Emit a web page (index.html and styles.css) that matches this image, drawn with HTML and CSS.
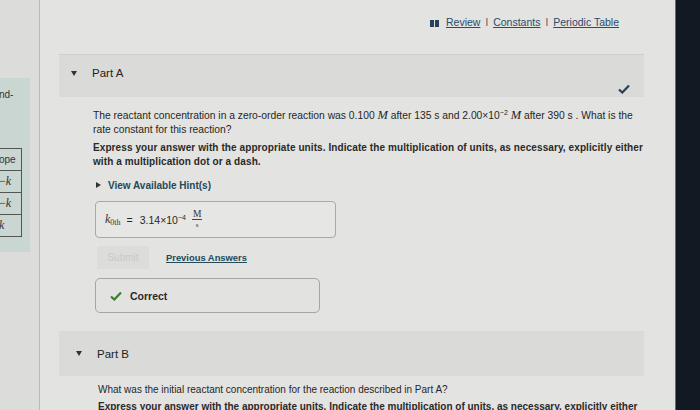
FILE: index.html
```html
<!DOCTYPE html>
<html>
<head>
<meta charset="utf-8">
<link rel="stylesheet" href="styles.css">
</head>
<body>
<div class="page">
  <aside class="side">
    <div class="teal">
      <div class="nd">nd-</div>
      <table class="tbl">
        <tr><td class="sans">ope</td></tr>
        <tr><td>&minus;<i>k</i></td></tr>
        <tr><td>&minus;<i>k</i></td></tr>
        <tr><td><i>k</i></td></tr>
      </table>
    </div>
  </aside>
  <main class="main">
    <div class="toplinks">
      <span class="book"><span></span><span></span></span>
      <a class="lnk">Review</a><span class="sep">I</span><a class="lnk">Constants</a><span class="sep">I</span><a class="lnk">Periodic Table</a>
    </div>
    <section class="part">
      <div class="part-head">
        <span class="tri"></span><span class="part-title">Part A</span>
        <svg class="done" width="12" height="10" viewBox="0 0 12 10"><path d="M1 5.5 L4.3 8.5 L11 1.5" fill="none" stroke="#2a3f55" stroke-width="2.2"/></svg>
      </div>
      <div class="part-body">
        <p class="q">The reactant concentration in a zero-order reaction was 0.100 <i class="m">M</i> after 135 s and 2.00&times;10<sup>&minus;2</sup> <i class="m">M</i> after 390 s . What is the rate constant for this reaction?</p>
        <p class="instr">Express your answer with the appropriate units. Indicate the multiplication of units, as necessary, explicitly either with a multiplication dot or a dash.</p>
        <div class="hint"><span class="tri-r"></span>View Available Hint(s)</div>
        <div class="answer">
          <span class="kvar"><i>k</i><sub>0th</sub></span>
          <span class="eq">=</span>
          <span class="val">3.14&times;10<sup>&minus;4</sup></span>
          <span class="frac"><span class="num">M</span><span class="den">s</span></span>
        </div>
        <div class="actions">
          <span class="submit">Submit</span>
          <a class="prev">Previous Answers</a>
        </div>
        <div class="correct">
          <svg width="12" height="10" viewBox="0 0 12 10"><path d="M1 5.5 L4.3 8.5 L11 1.5" fill="none" stroke="#3f7d2c" stroke-width="2.2"/></svg>
          <span>Correct</span>
        </div>
      </div>
    </section>
    <section class="part partb">
      <div class="part-head">
        <span class="tri"></span><span class="part-title">Part B</span>
      </div>
      <div class="part-body">
        <p class="q2">What was the initial reactant concentration for the reaction described in Part A?</p>
        <p class="q2 bold">Express your answer with the appropriate units. Indicate the multiplication of units, as necessary, explicitly either</p>
      </div>
    </section>
  </main>
  <div class="dark"></div>
</div>
</body>
</html>
```
FILE: styles.css
```css
html, body {
  margin: 0;
  padding: 0;
}
body {
  width: 700px;
  height: 410px;
  overflow: hidden;
  background: #e3e3e1;
  font-family: "Liberation Sans", Arial, sans-serif;
  color: #262626;
}
.page {
  display: flex;
  width: 700px;
  height: 410px;
}
.side {
  width: 40px;
  flex: none;
  background: #dcdddb;
  border-right: 1px solid #b9b9b7;
  padding-top: 78px;
  box-sizing: border-box;
  overflow: hidden;
}
.teal {
  width: 30px;
  height: 174px;
  background: #c9d6d2;
  overflow: hidden;
  padding-top: 11px;
  box-sizing: border-box;
}
.nd {
  font-size: 10px;
  color: #333;
  margin-left: -1px;
  height: 14px;
}
.tbl {
  border-collapse: collapse;
  margin-top: 45px;
  margin-left: -12px;
  width: 34px;
  font-family: "Liberation Serif", "Times New Roman", serif;
  font-size: 12px;
}
.tbl td {
  border: 1px solid #555;
  height: 21px;
  padding: 0 0 0 10px;
  color: #333;
  white-space: nowrap;
}
.tbl td.sans {
  font-family: "Liberation Sans", Arial, sans-serif;
  font-size: 10px;
}
.main {
  flex: 1;
  padding: 0 31px 0 19px;
  min-width: 0;
}
.toplinks {
  height: 55px;
  padding-top: 16px;
  box-sizing: border-box;
  border-bottom: 1px solid #cfcfcd;
  text-align: right;
  padding-right: 25px;
  font-size: 10.5px;
}
.book {
  display: inline-flex;
  gap: 1px;
  margin-right: 4px;
  vertical-align: -1px;
}
.book span {
  width: 4px;
  height: 7px;
  background: #27425f;
}
.lnk {
  color: #2c4a6b;
  text-decoration: underline;
}
.sep {
  color: #555;
  margin: 0 5px;
  font-size: 10px;
}
.part-head {
  height: 42px;
  background: #dadad8;
  display: flex;
  align-items: center;
  position: relative;
  padding-left: 12px;
  padding-bottom: 6px;
  box-sizing: border-box;
}
.tri {
  width: 0;
  height: 0;
  border-left: 3.5px solid transparent;
  border-right: 3.5px solid transparent;
  border-top: 5px solid #333;
  margin-right: 15px;
}
.part-title {
  font-size: 11.5px;
  color: #222;
}
.done {
  position: absolute;
  right: 14px;
  bottom: 3px;
}
.part-body {
  padding-left: 34px;
  padding-right: 0;
}
p {
  margin: 0;
}
.q {
  font-size: 10.3px;
  line-height: 14px;
  padding-top: 11px;
}
.m {
  font-family: "Liberation Serif", "Times New Roman", serif;
  font-size: 12.5px;
}
sup {
  font-size: 7px;
  vertical-align: 4px;
  line-height: 0;
}
.instr {
  font-size: 10px;
  letter-spacing: 0.09px;
  font-weight: bold;
  line-height: 14px;
  margin-top: 4px;
  color: #2a2a2a;
}
.hint {
  margin-top: 9px;
  font-size: 10px;
  font-weight: bold;
  color: #24495a;
  display: flex;
  align-items: center;
  height: 14px;
}
.tri-r {
  width: 0;
  height: 0;
  border-top: 3.5px solid transparent;
  border-bottom: 3.5px solid transparent;
  border-left: 5px solid #333;
  margin: 0 7px 0 3px;
}
.answer {
  margin-top: 9px;
  margin-left: 2px;
  width: 241px;
  height: 37px;
  box-sizing: border-box;
  border: 1px solid #a9a9a7;
  border-radius: 4px;
  background: #e6e6e4;
  display: flex;
  align-items: center;
  padding-left: 9px;
  font-size: 10.5px;
}
.kvar {
  font-family: "Liberation Serif", "Times New Roman", serif;
  font-size: 12px;
  color: #333;
}
.kvar sub {
  font-size: 8px;
  font-style: normal;
  vertical-align: -2px;
}
.eq {
  margin: 0 7px 0 6px;
}
.val sup {
  font-size: 7px;
}
.frac {
  display: inline-flex;
  flex-direction: column;
  align-items: center;
  margin-left: 6px;
  font-family: "Liberation Serif", "Times New Roman", serif;
  font-size: 9.5px;
  line-height: 10px;
  color: #333;
}
.num {
  border-bottom: 1px solid #444;
  padding: 0 1px;
}
.den {
  font-size: 7px;
}
.actions {
  display: flex;
  align-items: center;
  margin-top: 8px;
  margin-left: 4px;
  height: 23px;
}
.submit {
  width: 52px;
  height: 23px;
  background: #dcdcdb;
  color: #c9c9c9;
  font-size: 10px;
  display: flex;
  align-items: center;
  justify-content: center;
  border-radius: 2px;
}
.prev {
  margin-left: 17px;
  font-size: 9.4px;
  font-weight: bold;
  color: #24495a;
  text-decoration: underline;
}
.correct {
  margin-top: 9px;
  margin-left: 2px;
  width: 225px;
  height: 35px;
  box-sizing: border-box;
  border: 1px solid #a5a5a3;
  border-radius: 5px;
  background: #e2e2e0;
  display: flex;
  align-items: center;
  padding-left: 14px;
  font-size: 10.5px;
  font-weight: bold;
  color: #2a2a2a;
}
.correct svg {
  margin-right: 8px;
}
.partb {
  margin-top: 18px;
}
.partb .part-head {
  height: 45px;
  padding-left: 17px;
  padding-bottom: 0;
}
.partb .part-body {
  padding-left: 39px;
}
.q2 {
  font-size: 10px;
  line-height: 17px;
  padding-top: 5px;
  white-space: nowrap;
}
.q2 + .q2 {
  padding-top: 0;
}
.q2.bold {
  font-weight: bold;
  color: #2a2a2a;
}
.dark {
  width: 24px;
  flex: none;
  background: #111923;
  border-left: 1px solid #5f6f7a;
}
```
